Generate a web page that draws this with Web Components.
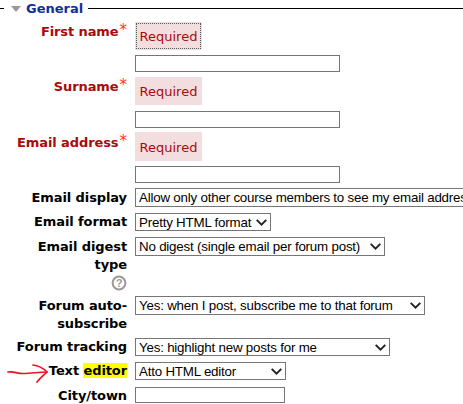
<!DOCTYPE html>
<html>
<head>
<meta charset="utf-8">
<title>General</title>
<style>
  html, body { margin: 0; padding: 0; background: #fff; overflow: hidden; }
  body { width: 463px; height: 404px; position: relative; }
  mark { background: #ffff00; color: inherit; }
</style>
</head>
<body>
<form-section heading="General">
  <form-row required style="--after:5px">
    <required-note slot="control" focused></required-note>
    <text-field slot="control"></text-field>
    First name</form-row>
  <form-row required style="--after:4px;--gap:6px">
    <required-note slot="control"></required-note>
    <text-field slot="control"></text-field>
    Surname</form-row>
  <form-row required style="--after:5px;--label-top:2px">
    <required-note slot="control" tall></required-note>
    <text-field slot="control"></text-field>
    Email address</form-row>
  <form-row style="--after:6px">
    <select-field slot="control" open-end width="328" height="19" value="Allow only other course members to see my email addresses"></select-field>
    Email display</form-row>
  <form-row style="--after:6px;--label-top:0px">
    <select-field slot="control" width="136" height="18" value="Pretty HTML format"></select-field>
    Email format</form-row>
  <form-row help style="--after:6px">
    <select-field slot="control" width="250" height="19" value="No digest (single email per forum post)"></select-field>
    Email digest type</form-row>
  <form-row style="--after:6px">
    <select-field slot="control" width="290" height="19" value="Yes: when I post, subscribe me to that forum"></select-field>
    Forum auto-subscribe</form-row>
  <form-row style="--after:6px;--label-top:0px">
    <select-field slot="control" width="255" height="18" value="Yes: highlight new posts for me"></select-field>
    Forum tracking</form-row>
  <form-row style="--after:7px;--label-top:0px">
    <select-field slot="control" width="151" height="18" value="Atto HTML editor"></select-field>
    Text <mark>editor</mark></form-row>
  <form-row style="--label-top:0px">
    <text-field slot="control" width="150" height="16"></text-field>
    City/town</form-row>
</form-section>

<svg id="arrow" width="50" height="24" viewBox="0 0 50 24" style="position:absolute;left:4px;top:362px" fill="none" stroke="#f01020" stroke-width="1.7" stroke-linecap="round" stroke-linejoin="round">
  <path d="M4 10 C9 9 13 11.5 19 11.5 C27 11.5 35 10 43 10"/>
  <path d="M29 3 C35 3.5 39 6 43 10 C40 13 36 16 33 20"/>
</svg>

<script>
class FormSection extends HTMLElement {
  constructor() {
    super();
    const root = this.attachShadow({ mode: "open" });
    root.innerHTML = `
      <style>
        :host { display: block; }
        .legend { display: flex; align-items: center; height: 22px; padding-bottom: 5px; box-sizing: border-box; }
        .rule { height: 1px; background: #000; flex: 1; }
        .rule.start { flex: 0 0 4px; }
        .tri { width: 0; height: 0; margin: 0 5px 0 7px; border: 5.5px solid transparent; border-top: 6px solid #999; border-bottom: 0; }
        h2 { margin: 0 5px 0 0; font: bold 13px/17px "DejaVu Sans", Verdana, sans-serif; color: #0f2f9e; }
      </style>
      <div class="legend">
        <span class="rule start"></span>
        <span class="tri"></span>
        <h2>${this.getAttribute("heading")}</h2>
        <span class="rule"></span>
      </div>
      <slot></slot>`;
  }
}

class FormRow extends HTMLElement {
  constructor() {
    super();
    const root = this.attachShadow({ mode: "open" });
    const star = this.hasAttribute("required") ? '<span class="star">*</span>' : "";
    const help = this.hasAttribute("help") ? `
      <svg class="help" width="16" height="16" viewBox="0 0 16 16">
        <circle cx="8" cy="8" r="6.4" fill="#fff" stroke="#999" stroke-width="2"/>
        <text x="8" y="12" text-anchor="middle" font-family="Liberation Sans, sans-serif" font-weight="bold" font-size="11" fill="#999">?</text>
      </svg>` : "";
    root.innerHTML = `
      <style>
        :host { display: grid; grid-template-columns: 117px 1fr; column-gap: 8px; padding-left: 10px; margin-bottom: var(--after, 0); }
        .label { text-align: right; font: bold 13px/18px "DejaVu Sans", Verdana, sans-serif; letter-spacing: -0.1px; color: #000; padding-top: var(--label-top, 1px); margin-bottom: -1px; }
        :host([required]) .label { color: #a90a0a; }
        .star { color: #ff3333; font-weight: normal; font-size: 15px; line-height: 1px; letter-spacing: 0; position: relative; top: -1px; margin-left: 1px; }
        .help { display: block; margin: 1px 0 0 auto; }
        .control { display: flex; flex-direction: column; align-items: flex-start; gap: var(--gap, 5px); min-width: 0; }
      </style>
      <div class="label"><slot></slot>${star}${help}</div>
      <div class="control"><slot name="control"></slot></div>`;
  }
}

class RequiredNote extends HTMLElement {
  constructor() {
    super();
    const root = this.attachShadow({ mode: "open" });
    root.innerHTML = `
      <style>
        :host { display: block; box-sizing: border-box; width: 67px; height: 28px; padding: 1px;
          background: #f2dede; font: 13px/28px "DejaVu Sans", Verdana, sans-serif; color: #a90a0a; text-align: center; }
        :host([tall]) { height: 29px; line-height: 30px; }
        div { height: 26px; }
        :host([focused]) div { outline: 1px dotted #555; outline-offset: -1px; }
      </style>
      <div>Required</div>`;
  }
}

class TextField extends HTMLElement {
  constructor() {
    super();
    const root = this.attachShadow({ mode: "open" });
    const w = this.getAttribute("width") || 205;
    const h = this.getAttribute("height") || 17;
    root.innerHTML = `
      <style>
        :host { display: block; }
        input { display: block; box-sizing: border-box; width: ${w}px; height: ${h}px; margin: 0; padding: 0 2px;
          background: #fff; border: 1px solid #767676; border-radius: 0; outline: 0; }
      </style>
      <input type="text">`;
  }
}

class SelectField extends HTMLElement {
  constructor() {
    super();
    const root = this.attachShadow({ mode: "open" });
    const w = this.getAttribute("width");
    const h = this.getAttribute("height");
    const openEnd = this.hasAttribute("open-end");
    const chevron = openEnd ? "" : `
      <svg width="11" height="7" viewBox="0 0 11 7" fill="none" stroke="#222" stroke-width="1.9">
        <path d="M0.7 0.8 L5.5 5.6 L10.3 0.8"/>
      </svg>`;
    root.innerHTML = `
      <style>
        :host { display: block; position: relative; width: ${w}px; }
        select { display: block; box-sizing: border-box; width: 100%; height: ${h}px; margin: 0; padding: 0 ${openEnd ? 0 : 18}px 0 3px;
          appearance: none; background: #fff; border: 1px solid #767676; border-radius: 0; color: #000; outline: 0;
          ${openEnd ? "border-right: 0;" : ""}
          font: 13.333px "Liberation Sans", Arial, sans-serif; letter-spacing: -0.2px; }
        svg { position: absolute; right: 4px; top: calc(50% - 3.5px); pointer-events: none; }
      </style>
      <select><option>${this.getAttribute("value")}</option></select>${chevron}`;
  }
}

customElements.define("form-section", FormSection);
customElements.define("form-row", FormRow);
customElements.define("required-note", RequiredNote);
customElements.define("text-field", TextField);
customElements.define("select-field", SelectField);
</script>
</body>
</html>
